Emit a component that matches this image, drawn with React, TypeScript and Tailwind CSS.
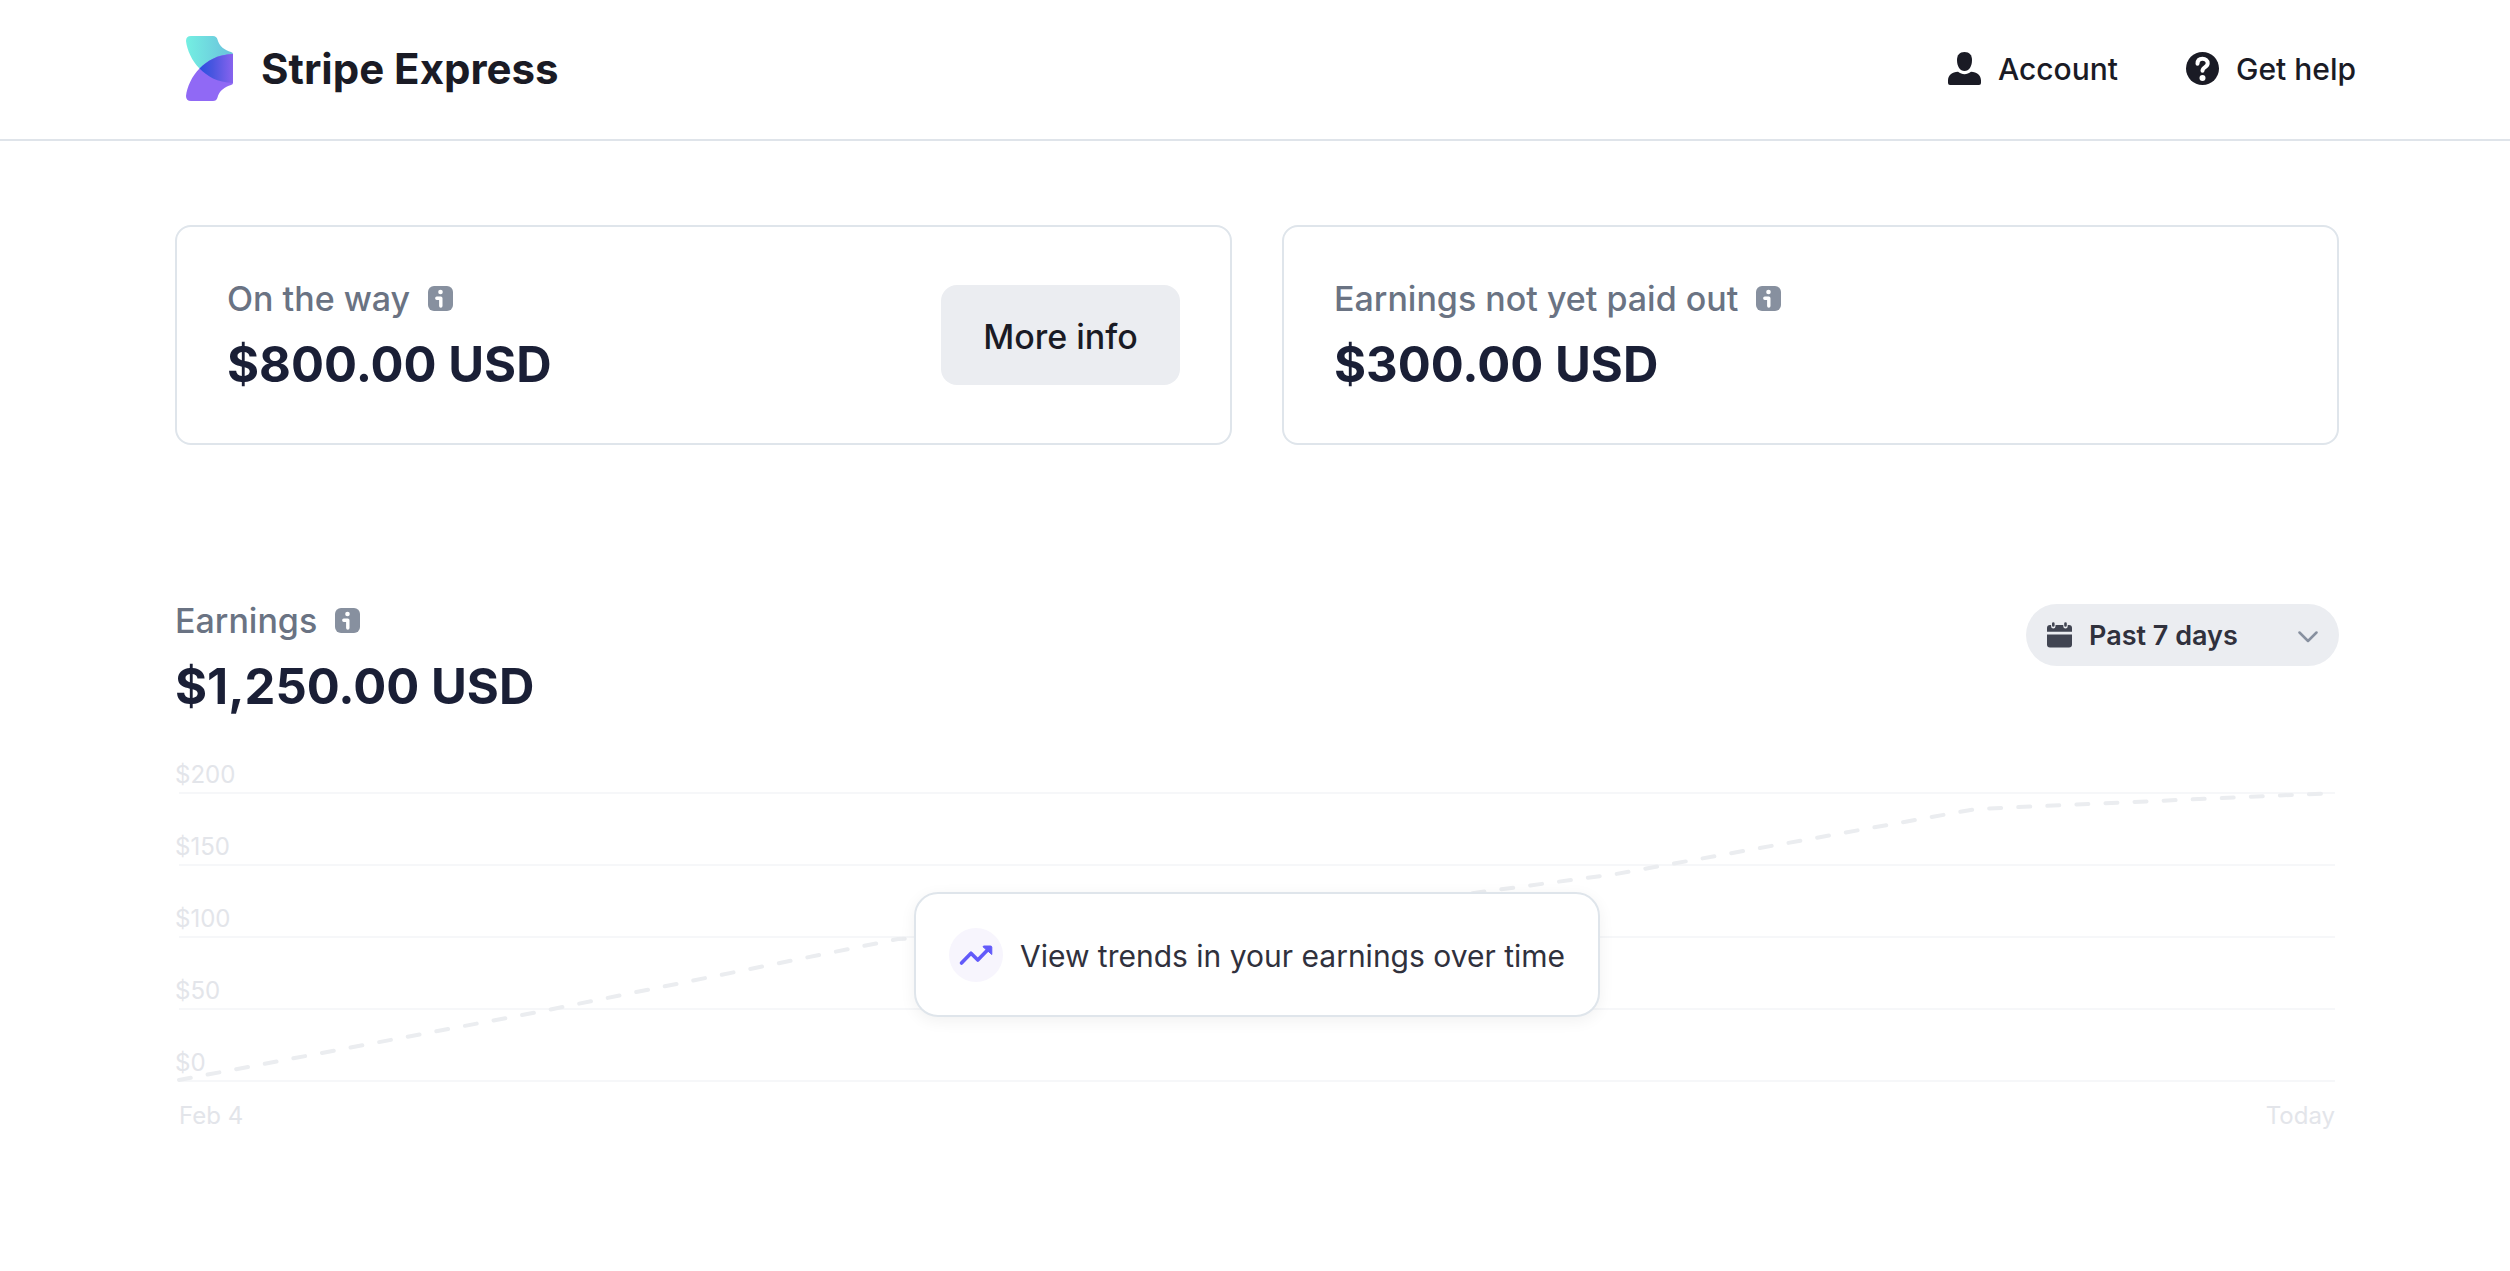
const axis = ["$200", "$150", "$100", "$50", "$0"];

function Logo() {
  return (
    <svg viewBox="0 0 47 65" className="w-[47px] h-[65px]" aria-hidden="true">
      <defs>
        <linearGradient id="teal" x1="0" y1="0" x2="1" y2="0">
          <stop offset="0" stopColor="#74efe2" />
          <stop offset="1" stopColor="#6ac0dc" />
        </linearGradient>
        <linearGradient id="blue" x1="0" y1="0" x2="1" y2="0">
          <stop offset="0" stopColor="#2b50e0" />
          <stop offset="0.4" stopColor="#4a56e0" />
          <stop offset="1" stopColor="#8763ee" />
        </linearGradient>
      </defs>
      <path
        d="M5 0H27Q30.500 0 31.500 3.500C33 10 39 14.500 45 16Q47 16.500 47 18V47C31 46.500 21 40 13.500 32.500C6 25 1 14 0 5Q0 0 5 0Z"
        fill="url(#teal)"
      />
      <path
        d="M5 65H27Q30.500 65 31.500 61.500C33 55 39 50.500 45 49Q47 48.500 47 47V18C31 18.500 21 25 13.500 32.500C6 40 1 51 0 60Q0 65 5 65Z"
        fill="#9069f5"
      />
      <path d="M13.500 32.500C21 25 31 18.500 47 18V47C31 46.500 21 40 13.500 32.500Z" fill="url(#blue)" />
    </svg>
  );
}

function AccountIcon() {
  return (
    <svg viewBox="0 0 33 33" className="w-[33px] h-[33px]" fill="#1a1b25" aria-hidden="true">
      <path d="M16.500 0C21.500 0 24 3 24 8C24 14.500 21 19 16.500 19C12 19 9 14.500 9 8C9 3 11.500 0 16.500 0Z" />
      <path d="M10 19.800C14 23 19 23 23 19.800C29 19.800 33 23.500 33 28.500V31Q33 33 31 33H2Q0 33 0 31V28.500C0 23.500 4 19.800 10 19.800Z" />
    </svg>
  );
}

function HelpIcon() {
  return (
    <svg viewBox="0 0 33 33" className="w-[33px] h-[33px]" fill="none" aria-hidden="true">
      <circle cx="16.5" cy="16.500" r="16.500" fill="#1a1b25" />
      <path
        d="M11.500 11.800C11.500 8.500 13.500 6.800 16.500 6.800C19.500 6.800 21.700 8.500 21.700 11.300C21.700 15.300 16.500 14.800 16.500 18.800"
        stroke="white"
        strokeWidth="4"
        strokeLinecap="round"
      />
      <circle cx="16.500" cy="26" r="3" fill="white" />
    </svg>
  );
}

function InfoButton({ label }: { label: string }) {
  return (
    <button type="button" aria-label={label} className="mb-0.5">
      <svg viewBox="0 0 25 25" className="w-[25px] h-[25px]" fill="none" aria-hidden="true">
        <rect width="25" height="25" rx="6" fill="#87909f" />
        <circle cx="12.500" cy="6" r="2.300" fill="white" />
        <path
          d="M8.800 12.300H12.800V20"
          stroke="white"
          strokeWidth="3.400"
          strokeLinecap="round"
          strokeLinejoin="round"
        />
      </svg>
    </button>
  );
}

function Balance({ label, amount }: { label: string; amount: string }) {
  return (
    <div>
      <div className="flex items-center gap-[18px]">
        <h2 className="text-[34px] leading-[60px] font-medium text-[#6a7383]">{label}</h2>
        <InfoButton label={`About ${label.toLowerCase()}`} />
      </div>
      <p className="text-[49px] leading-[72px] font-bold text-[#1a1f36]">{amount}</p>
    </div>
  );
}

function RangeSelect() {
  return (
    <div className="relative mt-[13px]">
      <svg
        viewBox="0 0 25 26"
        className="absolute left-[21px] top-[18px] w-[25px] h-[26px] pointer-events-none"
        aria-hidden="true"
      >
        <path d="M3 3H22Q25 3 25 6V9.700H0V6Q0 3 3 3Z" fill="#414552" />
        <path d="M0 12.500H25V22.500Q25 25.500 22 25.500H3Q0 25.500 0 22.500Z" fill="#414552" />
        <path d="M6.300 2.500V4.300M18.500 2.500V4.300" stroke="#ebedf1" strokeWidth="4.400" strokeLinecap="round" />
        <path d="M6.300 1.500V3.500M18.500 1.500V3.500" stroke="#414552" strokeWidth="2.600" strokeLinecap="round" />
      </svg>
      <select
        aria-label="Date range"
        className="appearance-none w-[313px] h-[62px] pt-0.5 pl-[63px] pr-14 rounded-full bg-[#ebedf1] text-[27px] font-semibold text-[#30313d]"
      >
        <option>Past 7 days</option>
      </select>
      <svg
        viewBox="0 0 20 12"
        className="absolute right-[21px] top-[27px] w-5 h-3 pointer-events-none"
        fill="none"
        aria-hidden="true"
      >
        <path
          d="M1.500 1.500L10 10L18.500 1.500"
          stroke="#87909f"
          strokeWidth="2.500"
          strokeLinecap="round"
          strokeLinejoin="round"
        />
      </svg>
    </div>
  );
}

function Chart() {
  return (
    <div className="relative -mt-px text-2xl text-[#e3e5ea]">
      {axis.map((tick) => (
        <div key={tick} className="pt-9">
          <p className="leading-[34px]">{tick}</p>
          <div className="h-0.5 mx-1 bg-[#f6f7f9]" />
        </div>
      ))}
      <div className="flex justify-between mt-4 px-1 leading-9">
        <span>Feb 4</span>
        <span>Today</span>
      </div>

      {/* Trend line */}
      <svg
        viewBox="0 0 2156 288"
        preserveAspectRatio="none"
        className="absolute left-1 top-[71px] w-[calc(100%-8px)] h-[288px] overflow-visible"
        fill="none"
        aria-hidden="true"
      >
        <polyline
          points="0,287 359,219 719,146 1078,129 1437,81 1797,16 2156,0"
          stroke="#ebedf0"
          strokeWidth="4"
          strokeLinecap="round"
          strokeDasharray="12 17.100"
          vectorEffect="non-scaling-stroke"
        />
      </svg>

      {/* Empty state */}
      <div className="absolute inset-x-0 top-[170px] flex justify-center">
        <div className="flex items-center gap-[17px] h-[125px] px-[33px] rounded-3xl border-2 border-[#dfe5eb] bg-white shadow-[0_4px_16px_rgba(0,0,0,0.06)]">
          <svg viewBox="0 0 54 54" className="w-[54px] h-[54px]" fill="none" aria-hidden="true">
            <circle cx="27" cy="27" r="27" fill="#f7f5fd" />
            <path
              d="M12.500 35L22 25.200L28.800 32L39 21.500"
              stroke="#625afa"
              strokeWidth="3.600"
              strokeLinecap="round"
              strokeLinejoin="round"
            />
            <path d="M34.500 18H41.500Q42.800 18 42.800 19.300V26.500L34 18.800Z" fill="#625afa" stroke="#625afa" strokeLinejoin="round" />
          </svg>
          <p className="pt-0.5 text-3xl text-[#30313d]">View trends in your earnings over time</p>
        </div>
      </div>
    </div>
  );
}

export default function App() {
  return (
    <div className="min-h-screen bg-white font-['Inter','Liberation_Sans',sans-serif] text-[#1a1b25]">
      <header className="flex items-center justify-between h-[141px] pb-0.5 pl-[186px] pr-[154px] border-b-2 border-[#dfe4ea]">
        <a href="#" className="flex items-center gap-7">
          <Logo />
          <span className="text-[42px] leading-[60px] font-bold">Stripe Express</span>
        </a>
        <nav className="flex items-center gap-[68px] text-3xl font-medium">
          <a href="#account" className="flex items-center gap-[17px]">
            <AccountIcon />
            Account
          </a>
          <a href="#help" className="flex items-center gap-[17px]">
            <HelpIcon />
            Get help
          </a>
        </nav>
      </header>

      <main className="pl-[175px] pr-[171px] pt-[84px]">
        <div className="grid grid-cols-2 gap-[50px]">
          <section className="flex items-center justify-between px-[50px] py-[42px] rounded-2xl border-2 border-[#dfe5eb]">
            <Balance label="On the way" amount="$800.00 USD" />
            <button
              type="button"
              className="w-[239px] h-[100px] pt-0.5 rounded-2xl bg-[#ebedf1] text-[34px] font-medium"
            >
              More info
            </button>
          </section>
          <section className="flex items-center px-[50px] py-[42px] rounded-2xl border-2 border-[#dfe5eb]">
            <Balance label="Earnings not yet paid out" amount="$300.00 USD" />
          </section>
        </div>

        <section className="mt-[146px]">
          <div className="flex items-start justify-between">
            <Balance label="Earnings" amount="$1,250.00 USD" />
            <RangeSelect />
          </div>
          <Chart />
        </section>
      </main>
    </div>
  );
}
